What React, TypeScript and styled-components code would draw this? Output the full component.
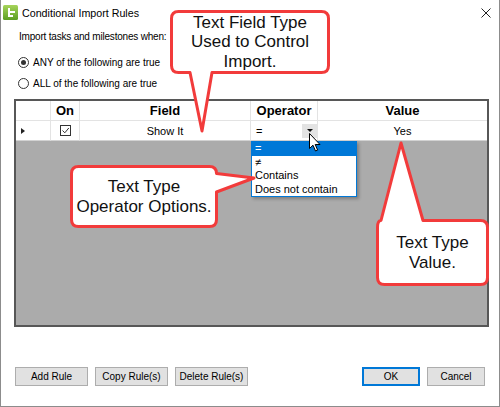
import styled, { createGlobalStyle } from 'styled-components';

const GlobalStyle = createGlobalStyle`
  html, body {
    margin: 0;
    padding: 0;
    background: #ffffff;
  }
  body {
    font-family: "Liberation Sans", Arial, sans-serif;
    color: #000;
  }
  * {
    box-sizing: border-box;
  }
`;

const Window = styled.div`
  position: relative;
  width: 500px;
  height: 407px;
  background: #fff;
  box-shadow: inset 1px 0 #8c8c8c, inset -1px 0 #8c8c8c, inset 0 -1px #8c8c8c;
  overflow: hidden;
  display: flex;
  flex-direction: column;
`;

const TitleBar = styled.div`
  height: 25px;
  display: flex;
  align-items: center;
  padding-left: 3px;
`;

const Title = styled.span`
  margin-left: 4px;
  font-size: 10.7px;
`;

const CloseButton = styled.div`
  margin-left: auto;
  margin-right: 1px;
  width: 26px;
  height: 25px;
  display: flex;
  align-items: center;
  justify-content: center;
`;

const Body = styled.div`
  display: flex;
  flex-direction: column;
  padding: 5px 10px 0 14px;
`;

const Prompt = styled.div`
  height: 14px;
  line-height: 14px;
  margin-left: 5px;
  font-size: 10px;
  letter-spacing: -0.2px;
`;

const RadioList = styled.div`
  margin-top: 8px;
  margin-left: 4px;
  display: flex;
  flex-direction: column;
`;

const RadioRow = styled.label`
  height: 21px;
  display: flex;
  align-items: center;
  gap: 4px;
  font-size: 10px;
`;

const RadioDot = styled.span<{ $checked?: boolean }>`
  width: 11px;
  height: 11px;
  border-radius: 50%;
  border: 1px solid #333;
  display: flex;
  align-items: center;
  justify-content: center;
  &::after {
    content: '';
    width: 5px;
    height: 5px;
    border-radius: 50%;
    background: ${p => (p.$checked ? '#333' : 'transparent')};
  }
`;

const RulesGrid = styled.div`
  margin-top: 5px;
  width: 475px;
  height: 228px;
  border: 2px solid #575757;
  background: #ababab;
  display: grid;
  grid-template-columns: 35px 29px 171px 67px 169px;
  grid-auto-rows: 20px;
  align-content: start;
`;

const HeaderCell = styled.div<{ $last?: boolean }>`
  background: #fff;
  border-right: ${p => (p.$last ? 'none' : '1px solid #e3e3e3')};
  border-bottom: 1px solid #e3e3e3;
  display: flex;
  align-items: center;
  justify-content: center;
  font-size: 13px;
  font-weight: bold;
`;

const Cell = styled.div<{ $last?: boolean; $left?: boolean }>`
  background: #fff;
  border-right: ${p => (p.$last ? 'none' : '1px solid #e3e3e3')};
  border-bottom: 1px solid #d2d2d2;
  display: flex;
  align-items: center;
  justify-content: ${p => (p.$left ? 'flex-start' : 'center')};
  padding-left: ${p => (p.$left ? '5px' : '0')};
  font-size: 11px;
`;

const RowMarker = styled.span`
  width: 0;
  height: 0;
  border-top: 3.5px solid transparent;
  border-bottom: 3.5px solid transparent;
  border-left: 4px solid #222;
`;

const CheckBox = styled.span`
  width: 11px;
  height: 11px;
  border: 1px solid #333;
  display: flex;
  align-items: center;
  justify-content: center;
`;

const ComboButton = styled.span`
  margin-left: auto;
  width: 15px;
  height: 14px;
  background: #e3e3e3;
  display: flex;
  align-items: center;
  justify-content: center;
  &::after {
    content: '';
    border-left: 3px solid transparent;
    border-right: 3px solid transparent;
    border-top: 3px solid #111;
  }
`;

const DropList = styled.ul`
  position: absolute;
  left: 251px;
  top: 141px;
  width: 106px;
  margin: 0;
  padding: 0;
  list-style: none;
  background: #fff;
  border: 1px solid #0078d7;
  box-shadow: 2px 2px 3px rgba(0, 0, 0, 0.25);
  font-size: 11px;
`;

const DropItem = styled.li<{ $selected?: boolean }>`
  height: 13.6px;
  line-height: 13.6px;
  padding-left: 3px;
  background: ${p => (p.$selected ? '#0078d7' : '#fff')};
  color: ${p => (p.$selected ? '#fff' : '#000')};
  white-space: nowrap;
`;

const ButtonBar = styled.div`
  margin-top: 40px;
  display: flex;
  gap: 7px;
  padding: 0 5px 0 1px;
`;

const Spacer = styled.div`
  flex: 1;
`;

const DialogButton = styled.button<{ $width: number; $default?: boolean }>`
  width: ${p => p.$width}px;
  height: 19px;
  padding: 0;
  background: #e1e1e1;
  border: 1px solid ${p => (p.$default ? '#0078d7' : '#adadad')};
  box-shadow: ${p => (p.$default ? 'inset 0 0 0 1px #0078d7' : 'none')};
  font-family: "Liberation Sans", Arial, sans-serif;
  font-size: 10px;
  color: #000;
`;

const CalloutLayer = styled.svg`
  position: absolute;
  left: 0;
  top: 0;
  pointer-events: none;
`;

const CalloutText = styled.div<{ $x: number; $y: number; $w: number; $h: number }>`
  position: absolute;
  left: ${p => p.$x}px;
  top: ${p => p.$y}px;
  width: ${p => p.$w}px;
  height: ${p => p.$h}px;
  display: flex;
  align-items: center;
  justify-content: center;
  text-align: center;
  font-family: "Liberation Sans", Arial, sans-serif;
  font-size: 17px;
  line-height: 19.5px;
  color: #111;
`;

const Cursor = styled.svg`
  position: absolute;
  left: 309px;
  top: 133px;
`;

const callouts = [
  'M178.5 11.5 H321.5 Q328.5 11.5 328.5 18.5 V65.5 Q328.5 72.5 321.5 72.5 H212 L202 131 L190 72.5 H178.5 Q171.5 72.5 171.5 65.5 V18.5 Q171.5 11.5 178.5 11.5 Z',
  'M78.5 166.5 H209.5 Q216.5 166.5 216.5 173.5 L254 178 L216.5 192 V219.5 Q216.5 226.5 209.5 226.5 H78.5 Q71.5 226.5 71.5 219.5 V173.5 Q71.5 166.5 78.5 166.5 Z',
  'M377.5 227.5 Q377.5 220.5 381 220.5 L401 143 L423 220.5 H480.5 Q487.5 220.5 487.5 227.5 V277.5 Q487.5 284.5 480.5 284.5 H384.5 Q377.5 284.5 377.5 277.5 Z',
];

const AppIcon = () => (
  <svg width="15" height="15" viewBox="0 0 15 15">
    <defs>
      <linearGradient id="appg" x1="0" y1="0" x2="0" y2="1">
        <stop offset="0" stopColor="#a6d45a" />
        <stop offset="1" stopColor="#5c9e22" />
      </linearGradient>
    </defs>
    <rect x="0" y="0" width="15" height="15" rx="1.5" fill="url(#appg)" />
    <path d="M5 3 H7 V6 H12 V8 H7 V10 H10 V12 H5 Z" fill="#fff" />
  </svg>
);

const App = () => {
  return (
    <>
      <GlobalStyle />
      <Window>
        <TitleBar>
          <AppIcon />
          <Title>Conditional Import Rules</Title>
          <CloseButton>
            <svg width="10" height="10" viewBox="0 0 10 10">
              <path d="M0.5 0.5 L9.5 9.5 M9.5 0.5 L0.5 9.5" stroke="#222" strokeWidth="1" />
            </svg>
          </CloseButton>
        </TitleBar>
        <Body>
          <Prompt>Import tasks and milestones when:</Prompt>
          <RadioList>
            <RadioRow>
              <RadioDot $checked />
              ANY of the following are true
            </RadioRow>
            <RadioRow>
              <RadioDot />
              ALL of the following are true
            </RadioRow>
          </RadioList>
          <RulesGrid>
            <HeaderCell />
            <HeaderCell>On</HeaderCell>
            <HeaderCell>Field</HeaderCell>
            <HeaderCell>Operator</HeaderCell>
            <HeaderCell $last>Value</HeaderCell>
            <Cell $left>
              <RowMarker />
            </Cell>
            <Cell>
              <CheckBox>
                <svg width="9" height="9" viewBox="0 0 9 9">
                  <path d="M1.5 4.5 L3.8 6.8 L7.8 2" stroke="#333" strokeWidth="1" fill="none" />
                </svg>
              </CheckBox>
            </Cell>
            <Cell>Show It</Cell>
            <Cell $left>
              =
              <ComboButton />
            </Cell>
            <Cell $last>Yes</Cell>
          </RulesGrid>
          <ButtonBar>
            <DialogButton $width={73}>Add Rule</DialogButton>
            <DialogButton $width={73}>Copy Rule(s)</DialogButton>
            <DialogButton $width={73}>Delete Rule(s)</DialogButton>
            <Spacer />
            <DialogButton $width={58} $default>OK</DialogButton>
            <DialogButton $width={58}>Cancel</DialogButton>
          </ButtonBar>
        </Body>

        <DropList>
          <DropItem $selected>=</DropItem>
          <DropItem>≠</DropItem>
          <DropItem>Contains</DropItem>
          <DropItem>Does not contain</DropItem>
        </DropList>

        <Cursor width="12" height="19" viewBox="0 0 12 19">
          <path
            d="M0.5 0.5 L0.5 15.5 L4 12.2 L6.5 18 L8.6 17.1 L6.2 11.5 L11 11.5 Z"
            fill="#fff"
            stroke="#000"
            strokeWidth="1"
            strokeLinejoin="round"
          />
        </Cursor>

        <CalloutLayer width="500" height="407" viewBox="0 0 500 407">
          {callouts.map((d, i) => (
            <path key={i} d={d} fill="#fff" stroke="#f23b3b" strokeWidth="3" strokeLinejoin="round" />
          ))}
        </CalloutLayer>
        <CalloutText $x={172} $y={12} $w={156} $h={60}>
          Text Field Type
          <br />
          Used to Control
          <br />
          Import.
        </CalloutText>
        <CalloutText $x={72} $y={167} $w={144} $h={59}>
          Text Type
          <br />
          Operator Options.
        </CalloutText>
        <CalloutText $x={378} $y={221} $w={109} $h={63}>
          Text Type
          <br />
          Value.
        </CalloutText>
      </Window>
    </>
  );
};

export default App;
